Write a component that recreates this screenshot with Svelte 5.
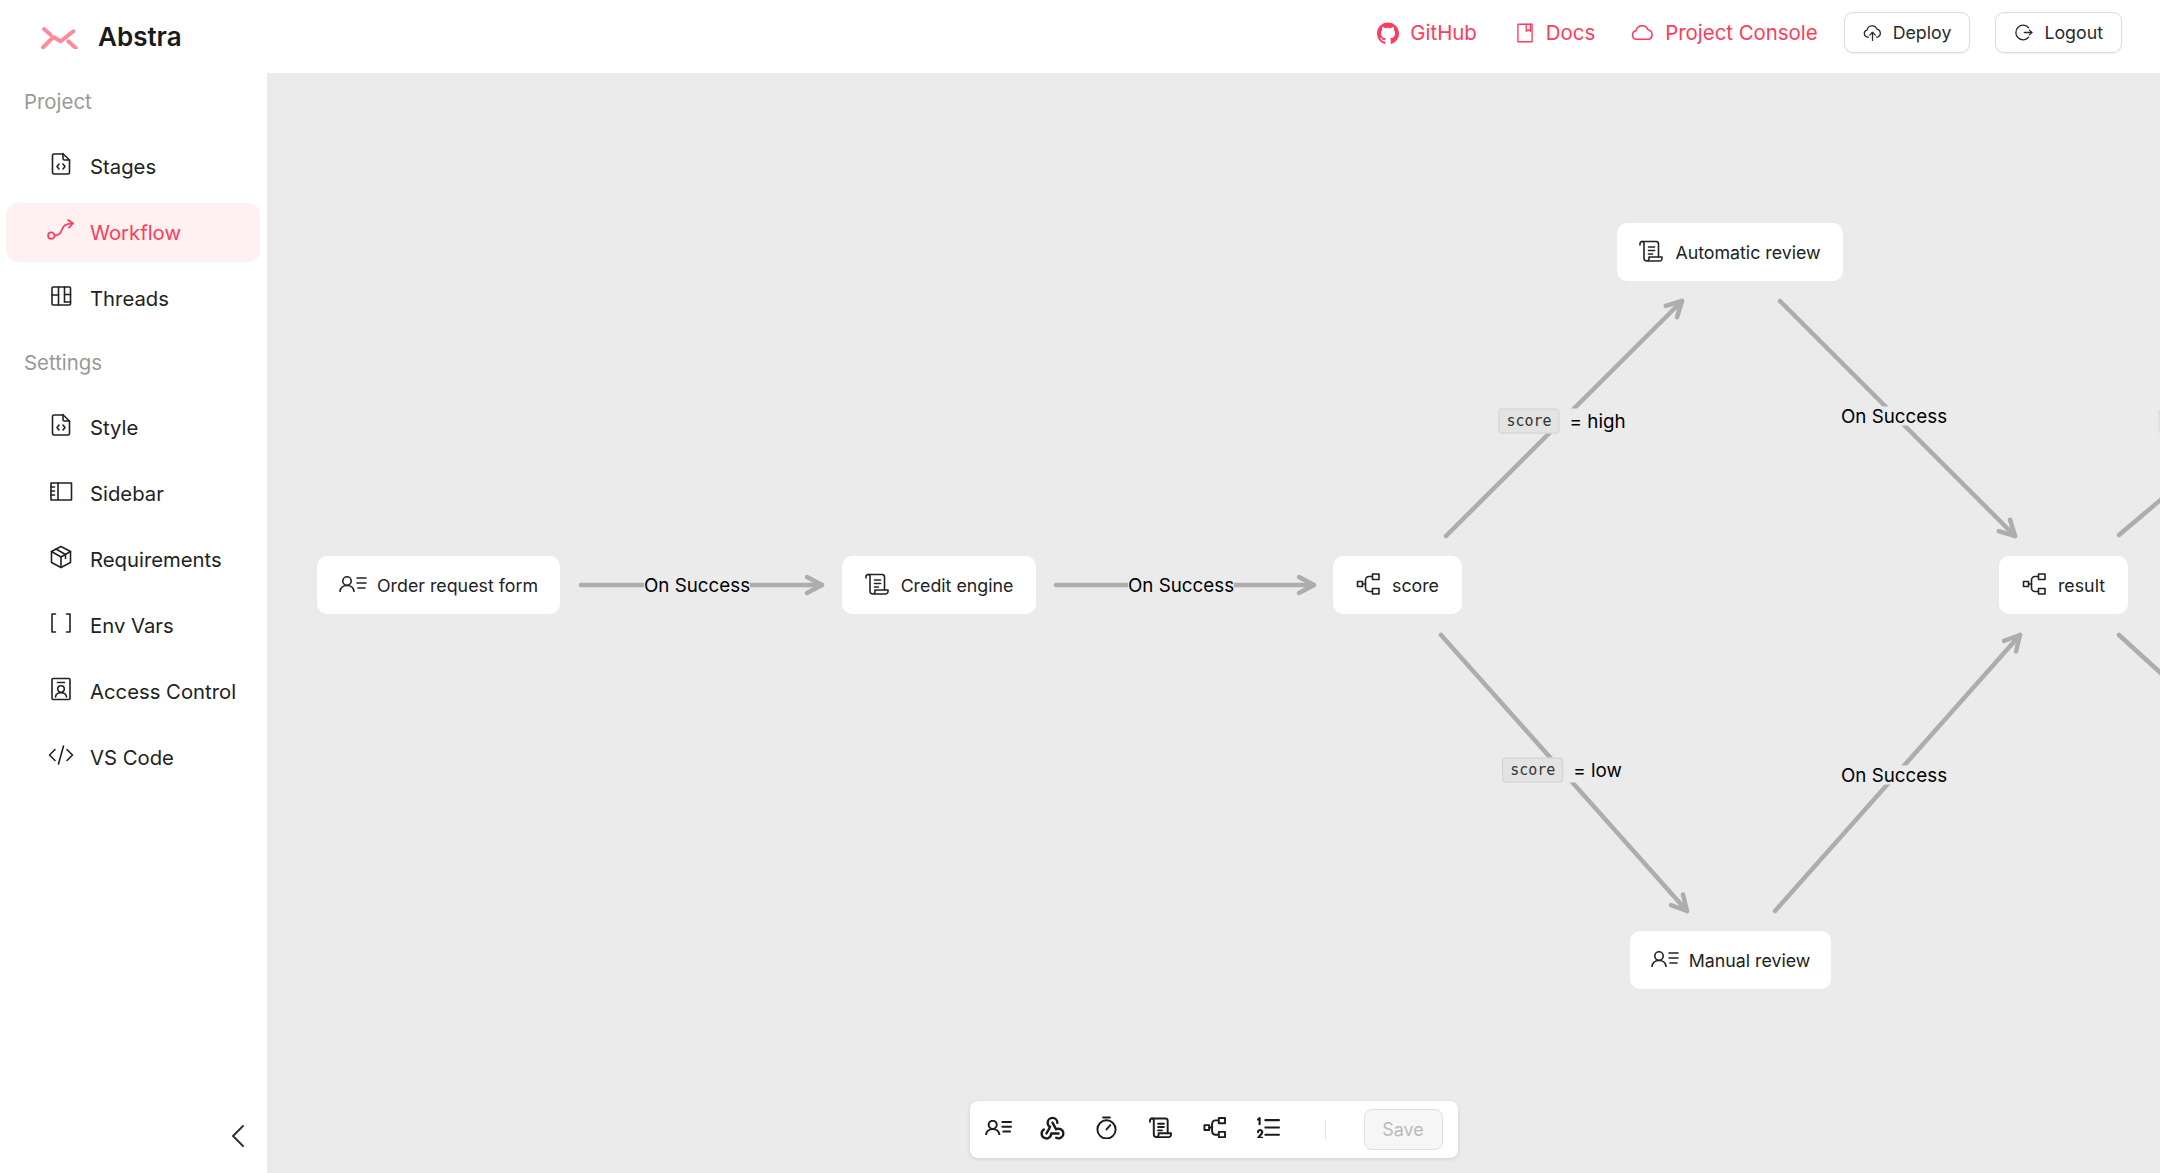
<script>
  const circle = (x, y, r) => `M${x - r} ${y}a${r} ${r} 0 1 0 ${2 * r} 0a${r} ${r} 0 1 0 ${-2 * r} 0`;

  // every icon is a viewBox plus a list of stroked paths
  const icons = {
    fileCode: { box: [24, 24], d: ['M14 1.5v5a1.5 1.5 0 0 0 1.5 1.5h5', 'M19 22H5a1.5 1.5 0 0 1-1.5-1.5v-17A1.5 1.5 0 0 1 5 2h9.2l6.3 6v12.5A1.5 1.5 0 0 1 19 22z', 'M10 12l-2 2.5 2 2.5', 'M14 12l2 2.5-2 2.5'] },
    flow: { box: [26, 20], d: [circle(4, 15.5, 3), 'M7 15.5c5-.5 5.5-2.500 7-6 1.500-3.500 3-5 10-5.500', 'M19.500 1l4.500 3-3.500 4'] },
    board: { box: [24, 24], d: ['M4 3h16.500a1 1 0 0 1 1 1v16a1 1 0 0 1-1 1H4a1 1 0 0 1-1-1V4a1 1 0 0 1 1-1z', 'M9.500 3v18', 'M15.500 3v15', 'M3 11h6.500', 'M15.500 10.500h6', 'M15.500 18h6'] },
    sidebar: { box: [24, 24], d: ['M2 4h20.500v17H2z', 'M9 4v17', 'M2 8h3.500', 'M2 12h3.500', 'M2 16h3.500'] },
    box: { box: [24, 24], d: ['M12 1.500l9.500 5v11L12 22.500l-9.500-5v-11z', 'M2.500 6.500L12 12l9.500-5.500', 'M12 12v10.500', 'M7 4l9.500 5.500v4'] },
    brackets: { box: [24, 24], d: ['M6.500 3H3v18h3.500', 'M17.500 3H21v18h-3.500'] },
    badge: { box: [24, 24], d: ['M4 1.500h16a1 1 0 0 1 1 1v19a1 1 0 0 1-1 1H4a1 1 0 0 1-1-1v-19a1 1 0 0 1 1-1z', 'M8.500 5.500h7', circle(12, 12, 3.3), 'M6.500 20c.3-2.800 2.500-4.200 5.500-4.200s5.200 1.400 5.500 4.200'] },
    code: { box: [26, 24], d: ['M7 6.500L1.500 12 7 17.500', 'M19 6.500l5.500 5.500-5.500 5.500', 'M15.500 3l-5 18'] },
    book: { box: [24, 24], d: ['M3.500 1.500h17v21h-17z', 'M13.500 1.500v8.500l2.500-2 2.500 2V1.500'] },
    cloud: { box: [24, 16], d: ['M6 15a4.500 4.500 0 0 1-.8-8.900 6.500 6.500 0 0 1 12.500-1.100A5.200 5.200 0 0 1 18.500 15z'] },
    cloudUp: { box: [24, 22], d: ['M7 16.500H6a4.500 4.500 0 0 1-.8-8.900 6.500 6.500 0 0 1 12.500-1.100 5.200 5.200 0 0 1 .8 10H17', 'M12 21v-10', 'M8.500 14l3.500-3.500 3.500 3.500'] },
    logout: { box: [24, 24], d: ['M18.500 6A9.200 9.200 0 1 0 18.500 18', 'M13 12h9.500', 'M19.500 9l3 3-3 3'] },
    form: { box: [28, 16], d: [circle(8, 5, 4.200), 'M1 15.500c.5-4 3.500-6 7-6s6.500 2 7 6', 'M18 2h9', 'M18 7h9', 'M19 12h7'] },
    webhook: { box: [24, 24], d: ['M4.876 13.610a4 4 0 1 0 6.124 3.390h6', 'M15.066 20.502a4 4 0 1 0 1.934-7.502c-.706 0-1.424.179-2 .5l-3-5.500', 'M16 8a4 4 0 1 0-8 0c0 1.506.77 2.818 2 3.500l-3 5.500'] },
    timer: { box: [24, 24], d: [circle(12, 14, 9.500), 'M8.500 1.500h7', 'M12 14l4-4.500'] },
    script: { box: [24, 22], d: ['M1 5V3.500A2 2 0 0 1 3 1.500h14a2.500 2.500 0 0 1 2.500 2.500v13', 'M3 1.500a2 2 0 0 1 2 2V18a3 3 0 0 0 3 3h12.500a2.500 2.500 0 0 0 2.500-2.500V17H10v1.500a2.500 2.500 0 0 1-2.500 2.500', 'M9.500 7h6', 'M9.500 10.500h6', 'M9.500 14h4'] },
    branch: { box: [24, 22], d: ['M1.500 8.500h5v5h-5z', 'M6.500 11h3', 'M15.500 3.500H13A3.500 3.500 0 0 0 9.500 7v8a3.500 3.500 0 0 0 3.500 3.500h2.500', 'M16.500 1h6.500v5.500h-6.500z', 'M16.500 15.500h6.500V21h-6.500z'] },
    list: { box: [22, 21], d: ['M8 3h13', 'M8 10h13', 'M8 17h13', 'M2.500 7V1L1 2.500', 'M1 14.500a2 2 0 1 1 3.500 1.300L1 20h4'] }
  };

  const projectItems = [
    { label: 'Stages', icon: 'fileCode' },
    { label: 'Workflow', icon: 'flow', active: true },
    { label: 'Threads', icon: 'board' }
  ];
  const settingsItems = [
    { label: 'Style', icon: 'fileCode' },
    { label: 'Sidebar', icon: 'sidebar' },
    { label: 'Requirements', icon: 'box' },
    { label: 'Env Vars', icon: 'brackets' },
    { label: 'Access Control', icon: 'badge' },
    { label: 'VS Code', icon: 'code' }
  ];

  // canvas starts here on the page, diagram data below is in page coordinates
  const originX = 267;
  const originY = 73;

  const nodes = [
    { label: 'Order request form', icon: 'form', x: 317, y: 556, w: 243 },
    { label: 'Credit engine', icon: 'script', x: 842, y: 556, w: 194 },
    { label: 'score', icon: 'branch', x: 1333, y: 556, w: 129 },
    { label: 'Automatic review', icon: 'script', x: 1617, y: 223, w: 226 },
    { label: 'Manual review', icon: 'form', x: 1630, y: 931, w: 201 },
    { label: 'result', icon: 'branch', x: 1999, y: 556, w: 129 }
  ];

  const edges = [
    { x1: 581, y1: 585, x2: 822, y2: 585, head: true },
    { x1: 1056, y1: 585, x2: 1314, y2: 585, head: true },
    { x1: 1446, y1: 536, x2: 1682, y2: 301, head: true },
    { x1: 1780, y1: 301, x2: 2015, y2: 536, head: true },
    { x1: 1441, y1: 635, x2: 1687, y2: 911, head: true },
    { x1: 1775, y1: 911, x2: 2020, y2: 635, head: true },
    { x1: 2119, y1: 535, x2: 2164, y2: 497 },
    { x1: 2119, y1: 635, x2: 2164, y2: 676 }
  ];

  const labels = [
    { text: 'On Success', x: 697, y: 585 },
    { text: 'On Success', x: 1181, y: 585 },
    { text: 'On Success', x: 1894, y: 416 },
    { text: 'On Success', x: 1894, y: 775 },
    { chip: 'score', text: '= high', x: 1562, y: 421 },
    { chip: 'score', text: '= low', x: 1562, y: 770 }
  ];

  const tools = ['form', 'webhook', 'timer', 'script', 'branch', 'list'];

  function arrowHead(e) {
    const a = Math.atan2(e.y2 - e.y1, e.x2 - e.x1);
    const back = 15;
    const side = 8;
    const bx = e.x2 - back * Math.cos(a);
    const by = e.y2 - back * Math.sin(a);
    const px = -Math.sin(a) * side;
    const py = Math.cos(a) * side;
    return `${bx + px},${by + py} ${e.x2},${e.y2} ${bx - px},${by - py}`;
  }
</script>

{#snippet icon(name, size = 24, cls = '')}
  <svg class="icon {cls}" width={size} height={size * icons[name].box[1] / icons[name].box[0]} viewBox="0 0 {icons[name].box[0]} {icons[name].box[1]}">
    {#each icons[name].d as d}
      <path {d} />
    {/each}
  </svg>
{/snippet}

{#snippet navItem(item)}
  <a class="nav-item" class:active={item.active} href="#top">
    <span class="nav-icon">{@render icon(item.icon, item.icon === 'flow' ? 28 : item.icon === 'code' ? 26 : 24)}</span>
    <span>{item.label}</span>
  </a>
{/snippet}

<div class="app">
  <header class="topbar">
    <div class="brand">
      <svg class="logo" width="40" height="24" viewBox="0 0 40 24">
        <path d="M5 4L11.500 9.700" />
        <path d="M4 22.300L14.300 12L21.700 16.300L34.300 6.300" />
        <path d="M29.300 16.300L36.700 23" />
      </svg>
      <span class="brand-name">Abstra</span>
    </div>
    <div class="actions">
      <a class="link" href="#top">
        <svg class="gh" width="22" height="22" viewBox="0 0 24 24"><path d="M12 .5C5.370.5 0 5.870 0 12.500c0 5.300 3.440 9.800 8.210 11.390.6.11.82-.26.82-.58 0-.29-.01-1.040-.02-2.040-3.340.73-4.040-1.610-4.040-1.610-.55-1.390-1.340-1.760-1.340-1.760-1.090-.75.08-.73.08-.73 1.210.08 1.840 1.240 1.840 1.240 1.070 1.840 2.810 1.310 3.500 1 .11-.78.42-1.310.76-1.610-2.670-.3-5.470-1.330-5.470-5.930 0-1.310.47-2.380 1.240-3.220-.12-.3-.54-1.520.12-3.180 0 0 1.010-.32 3.300 1.230a11.500 11.500 0 0 1 6 0c2.290-1.550 3.300-1.230 3.300-1.230.66 1.660.24 2.880.12 3.180.77.84 1.240 1.910 1.240 3.220 0 4.610-2.810 5.630-5.480 5.920.43.37.81 1.100.81 2.220 0 1.600-.01 2.900-.01 3.290 0 .32.22.7.83.58C20.570 22.300 24 17.800 24 12.500 24 5.870 18.630.5 12 .5z" /></svg>
        GitHub
      </a>
      <a class="link" href="#top">{@render icon('book', 20)} Docs</a>
      <a class="link" href="#top">{@render icon('cloud', 23)} Project Console</a>
      <button class="btn">{@render icon('cloudUp', 19)} Deploy</button>
      <button class="btn">{@render icon('logout', 19)} Logout</button>
    </div>
  </header>

  <div class="body">
    <aside class="sidebar">
      <div class="section-title">Project</div>
      <nav class="nav">
        {#each projectItems as item}
          {@render navItem(item)}
        {/each}
      </nav>
      <div class="section-title settings">Settings</div>
      <nav class="nav">
        {#each settingsItems as item}
          {@render navItem(item)}
        {/each}
      </nav>
      <button class="collapse" aria-label="Collapse sidebar">
        <svg width="14" height="24" viewBox="0 0 14 24"><path d="M12 2L2 12l10 10" /></svg>
      </button>
    </aside>

    <main class="canvas">
      <svg class="edges" width="1893" height="1100">
        <g transform="translate({-originX} {-originY})">
          {#each edges as e}
            <line x1={e.x1} y1={e.y1} x2={e.x2} y2={e.y2} />
            {#if e.head}
              <polyline points={arrowHead(e)} />
            {/if}
          {/each}
        </g>
      </svg>

      {#each labels as l}
        <div class="edge-label" style="left: {l.x - originX}px; top: {l.y - originY}px">
          {#if l.chip}<code class="chip">{l.chip}</code>{/if}
          <span>{l.text}</span>
        </div>
      {/each}

      {#each nodes as n}
        <div class="node" class:tight={n.icon === 'form'} style="left: {n.x - originX}px; top: {n.y - originY}px; width: {n.w}px">
          {@render icon(n.icon, n.icon === 'form' ? 28 : 24)}
          <span>{n.label}</span>
        </div>
      {/each}

      <div class="peek"></div>

      <div class="toolbar">
        <div class="tools">
          {#each tools as t}
            <button class="tool" aria-label={t}>
              {@render icon(t, t === 'form' ? 27 : t === 'webhook' ? 29 : 23)}
            </button>
          {/each}
        </div>
        <span class="divider"></span>
        <button class="save" disabled>Save</button>
      </div>
    </main>
  </div>
</div>

<style>
  :global(body) {
    margin: 0;
    background: #fff;
  }

  .app {
    display: flex;
    flex-direction: column;
    height: 100vh;
    overflow: hidden;
    font-family: Inter, "Liberation Sans", sans-serif;
    color: #222;
  }

  .icon {
    flex: none;
    fill: none;
    stroke: currentColor;
    stroke-width: 1.6;
    stroke-linecap: round;
    stroke-linejoin: round;
  }

  /* header */
  .topbar {
    flex: none;
    height: 73px;
    display: flex;
    align-items: center;
    justify-content: space-between;
    padding: 0 38px 0 39px;
    box-sizing: border-box;
    background: #fff;
  }

  .brand {
    display: flex;
    align-items: center;
    gap: 19px;
  }

  .logo {
    fill: none;
    stroke: #ff8a9b;
    stroke-width: 4;
    stroke-linecap: round;
    stroke-linejoin: round;
  }

  .brand-name {
    font-size: 26px;
    font-weight: 600;
    color: #1a1a1a;
  }

  .actions {
    display: flex;
    align-items: center;
    padding-bottom: 8px;
  }

  .link {
    display: flex;
    align-items: center;
    gap: 11px;
    margin-right: 36px;
    font-size: 20.4px;
    color: #ff3b5c;
    text-decoration: none;
  }

  .link:first-child {
    margin-right: 38px;
  }

  .link:nth-child(3) {
    margin-right: 26px;
  }

  .gh {
    fill: currentColor;
  }

  .btn {
    display: flex;
    align-items: center;
    gap: 11px;
    height: 41px;
    padding: 0 18px;
    box-sizing: border-box;
    border: 1.5px solid #dcdcdc;
    border-radius: 9px;
    background: #fff;
    box-shadow: 0 1px 2px rgba(0, 0, 0, 0.06);
    font: inherit;
    font-size: 17.8px;
    color: #2a2a2a;
  }

  .btn + .btn {
    margin-left: 25px;
  }

  /* sidebar */
  .body {
    flex: 1;
    display: flex;
    min-height: 0;
  }

  .sidebar {
    flex: none;
    width: 267px;
    box-sizing: border-box;
    display: flex;
    flex-direction: column;
    padding: 16px 7px 25px 6px;
  }

  .section-title {
    margin: 0 0 22px 18px;
    font-size: 20.4px;
    line-height: 26px;
    color: #999;
  }

  .section-title.settings {
    margin-top: 22px;
  }

  .nav {
    display: flex;
    flex-direction: column;
    gap: 7px;
  }

  .nav-item {
    display: flex;
    align-items: center;
    height: 59px;
    padding-left: 42px;
    border-radius: 12px;
    font-size: 20.3px;
    color: #222;
    text-decoration: none;
  }

  .nav-item.active {
    background: #fff0f1;
    color: #ff3b5c;
  }

  .nav-icon {
    display: flex;
    justify-content: center;
    width: 26px;
    margin-right: 16px;
    margin-bottom: 6px;
  }

  .collapse {
    align-self: flex-end;
    display: flex;
    margin-top: auto;
    margin-right: 15px;
    padding: 0;
    border: none;
    background: none;
  }

  .collapse path {
    fill: none;
    stroke: #333;
    stroke-width: 2;
    stroke-linecap: round;
    stroke-linejoin: round;
  }

  /* diagram */
  .canvas {
    position: relative;
    flex: 1;
    overflow: hidden;
    background: #ebebeb;
  }

  .edges {
    position: absolute;
    left: 0;
    top: 0;
  }

  .edges line,
  .edges polyline {
    fill: none;
    stroke: #adadad;
    stroke-width: 4.5;
    stroke-linecap: round;
    stroke-linejoin: round;
  }

  .edge-label {
    position: absolute;
    display: flex;
    align-items: center;
    gap: 10px;
    transform: translate(-50%, -50%);
    background: #ebebeb;
    font-size: 18.8px;
    line-height: 19px;
    color: #000;
    white-space: nowrap;
  }

  .chip {
    height: 25px;
    padding: 0 7px;
    line-height: 23px;
    box-sizing: border-box;
    border: 1px solid #d0d0d0;
    border-radius: 3px;
    background: #e3e3e3;
    font-family: "DejaVu Sans Mono", "Liberation Mono", monospace;
    font-size: 15px;
    color: #333;
  }

  .node {
    position: absolute;
    display: flex;
    align-items: center;
    justify-content: center;
    gap: 12px;
    height: 58px;
    box-sizing: border-box;
    border-radius: 10px;
    background: #fff;
    font-size: 17.8px;
    color: #222;
  }

  .node.tight {
    gap: 10px;
  }

  .node :global(svg) {
    margin-bottom: 3px;
  }

  /* edge of a label that continues past the visible canvas */
  .peek {
    position: absolute;
    right: 0;
    top: 337px;
    width: 2px;
    height: 23px;
    background: #e0e0e0;
  }

  .toolbar {
    position: absolute;
    left: 50%;
    bottom: 15px;
    transform: translateX(-50%);
    display: flex;
    align-items: center;
    width: 488px;
    height: 57px;
    box-sizing: border-box;
    padding: 0 15px 0 2px;
    border-radius: 8px;
    background: #fff;
    box-shadow: 0 1px 4px rgba(0, 0, 0, 0.12);
  }

  .tools {
    display: flex;
  }

  .tool {
    display: flex;
    align-items: center;
    justify-content: center;
    width: 54px;
    height: 40px;
    margin-bottom: 4px;
    padding: 0;
    border: none;
    background: none;
    color: #1c1c1c;
  }

  .tool :global(svg) {
    stroke-width: 2;
  }

  .divider {
    width: 1px;
    height: 20px;
    margin-left: 29px;
    background: #e6e6e6;
  }

  .save {
    width: 79px;
    height: 41px;
    margin-left: auto;
    padding: 0;
    border: 1.5px solid #e0e0e0;
    border-radius: 8px;
    background: #f6f6f6;
    font: inherit;
    font-size: 18px;
    color: #bbb;
  }
</style>
